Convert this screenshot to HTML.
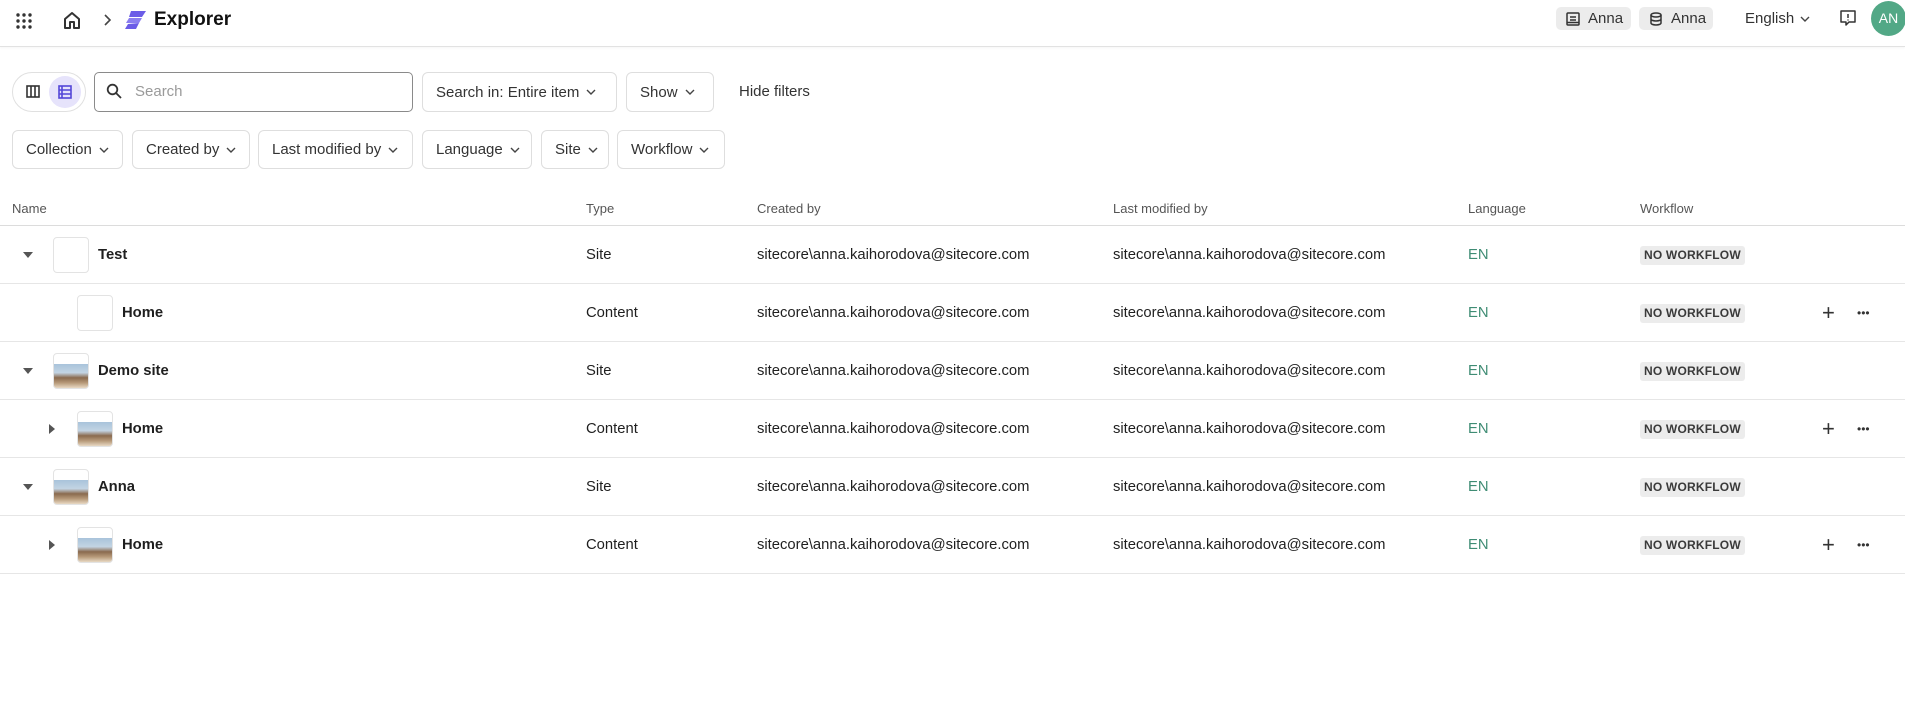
<!DOCTYPE html>
<html><head><meta charset="utf-8">
<style>
*{box-sizing:border-box;margin:0;padding:0}
body{width:1905px;height:724px;background:#fff;font-family:"Liberation Sans",Arial,sans-serif;color:#1a1a1a;position:relative;overflow:hidden}
.a{position:absolute}
.top{position:absolute;left:0;top:0;width:1905px;height:47px;border-bottom:1px solid #e2e2e2;box-shadow:0 1px 2px rgba(0,0,0,.04)}
.btn{position:absolute;border:1px solid #dedede;border-radius:6px;font-size:15px;color:#333;display:flex;align-items:center;padding-left:13px;height:39px}
.btn svg{margin-left:7px}
.hd{position:absolute;top:201px;font-size:13px;color:#555}
.row{position:absolute;left:0;width:1905px;height:58px;border-bottom:1px solid #e6e6e6}
.cell{position:absolute;top:0;line-height:58px;font-size:14.8px;color:#1f1f1f}
.nm{font-weight:bold}
.en{color:#3f8c74}
.wf{position:absolute;top:20px;left:1640px;height:19px;line-height:19px;padding:0 4px;background:#ececec;border-radius:3px;font-size:12px;font-weight:bold;color:#3a3a3a;letter-spacing:.2px}
.thumb{position:absolute;top:11px;width:36px;height:36px;border:1px solid #e3e3e3;border-radius:4px;background:#fff;overflow:hidden}
.img{background:linear-gradient(180deg,#fff 0,#fff 30%,#a9c3db 30%,#c3d4e3 55%,#8a6a4e 70%,#b79a7a 85%,#e8d9c4 100%)}
.tri{position:absolute;top:25px}
.dots{font-size:12px !important;letter-spacing:0 !important}
</style></head><body>
<div class="top">
  <svg class="a" style="left:15px;top:12px" width="18" height="18" viewBox="0 0 18 18" fill="#333"><circle cx="3" cy="3" r="1.7"/><circle cx="9" cy="3" r="1.7"/><circle cx="15" cy="3" r="1.7"/><circle cx="3" cy="9" r="1.7"/><circle cx="9" cy="9" r="1.7"/><circle cx="15" cy="9" r="1.7"/><circle cx="3" cy="15" r="1.7"/><circle cx="9" cy="15" r="1.7"/><circle cx="15" cy="15" r="1.7"/></svg>
  <svg class="a" style="left:62px;top:10px" width="20" height="20" viewBox="0 0 20 20" fill="none" stroke="#333" stroke-width="2"><path d="M3 9 L10 3 L17 9 V18 H12 V12 H8 V18 H3 Z" stroke-linejoin="round"/></svg>
  <svg class="a" style="left:102px;top:13px" width="10" height="14" viewBox="0 0 10 14" fill="none" stroke="#444" stroke-width="1.6"><path d="M3 2 L8 7 L3 12"/></svg>
  <svg class="a" style="left:125px;top:10px" width="22" height="20" viewBox="0 0 22 20"><path d="M6 1 H21 L17 7 H4 Z" fill="#6b5ce7"/><path d="M4 8 H17 L14 13 H1 Z" fill="#8b7ef0"/><path d="M14 13 L11 19 H0 L3 14 Z" fill="#6b5ce7"/></svg>
  <div class="a" style="left:154px;top:9px;font-size:19px;font-weight:bold;color:#111">Explorer</div>
  <div class="a" style="left:1556px;top:7px;width:75px;height:23px;background:#ececec;border-radius:5px;font-size:15px;color:#333;line-height:23px;padding-left:32px">Anna</div>
  <svg class="a" style="left:1566px;top:12px" width="14" height="14" viewBox="0 0 14 14" fill="none" stroke="#333" stroke-width="1.5"><rect x="1" y="1" width="12" height="12" rx="1"/><path d="M4 5H10M4 8H10M1 10.5H13"/></svg>
  <div class="a" style="left:1639px;top:7px;width:74px;height:23px;background:#ececec;border-radius:5px;font-size:15px;color:#333;line-height:23px;padding-left:32px">Anna</div>
  <svg class="a" style="left:1649px;top:12px" width="14" height="14" viewBox="0 0 14 14" fill="none" stroke="#333" stroke-width="1.5"><ellipse cx="7" cy="3" rx="5" ry="2"/><path d="M2 3V11C2 12 4 13 7 13S12 12 12 11V3M2 7C2 8 4 9 7 9S12 8 12 7"/></svg>
  <div class="a" style="left:1745px;top:10px;font-size:15px;color:#333">English</div>
  <svg class="a" style="left:1800px;top:15px" width="10" height="8" viewBox="0 0 10 8" fill="none" stroke="#444" stroke-width="1.4"><path d="M1 2L5 6L9 2"/></svg>
  <svg class="a" style="left:1839px;top:9px" width="18" height="18" viewBox="0 0 18 18" fill="none" stroke="#333" stroke-width="1.5"><path d="M2 2H16V13H10L7 16V13H2Z" stroke-linejoin="round"/><path d="M9 5V9M9 10.5V11.5"/></svg>
  <div class="a" style="left:1871px;top:1px;width:35px;height:35px;border-radius:50%;background:#52a886;color:#fff;font-size:14px;line-height:35px;text-align:center">AN</div>
</div>

<div class="a" style="left:12px;top:72px;width:74px;height:40px;border:1px solid #e0e0e0;border-radius:20px"></div>
<svg class="a" style="left:26px;top:85px" width="14" height="13" viewBox="0 0 14 13" fill="none" stroke="#333" stroke-width="1.6"><rect x="1" y="1" width="12" height="11"/><path d="M5 1V12M9 1V12"/></svg>
<div class="a" style="left:49px;top:76px;width:32px;height:32px;border-radius:50%;background:#e6e3fb"></div>
<svg class="a" style="left:58px;top:85px" width="14" height="14" viewBox="0 0 14 14" fill="none" stroke="#5447d8" stroke-width="1.6"><rect x="1" y="1" width="12" height="12"/><path d="M1 5H13M1 9H13M4 1V13"/></svg>
<div class="a" style="left:94px;top:72px;width:319px;height:40px;border:1px solid #8a8a8a;border-radius:5px"></div>
<svg class="a" style="left:106px;top:83px" width="16" height="16" viewBox="0 0 16 16" fill="none" stroke="#333" stroke-width="1.8"><circle cx="6.5" cy="6.5" r="4.8"/><path d="M10 10L15 15"/></svg>
<div class="a" style="left:135px;top:83px;font-size:15px;color:#9a9a9a">Search</div>
<div class="btn" style="left:422px;top:72px;width:195px;height:40px">Search in: Entire item<svg width="10" height="8" viewBox="0 0 10 8" fill="none" stroke="#444" stroke-width="1.4"><path d="M1 2L5 6L9 2"/></svg></div>
<div class="btn" style="left:626px;top:72px;width:88px;height:40px">Show<svg width="10" height="8" viewBox="0 0 10 8" fill="none" stroke="#444" stroke-width="1.4"><path d="M1 2L5 6L9 2"/></svg></div>
<div class="a" style="left:739px;top:83px;font-size:15px;color:#333">Hide filters</div>

<div class="btn" style="left:12px;top:130px;width:111px">Collection<svg width="10" height="8" viewBox="0 0 10 8" fill="none" stroke="#444" stroke-width="1.4"><path d="M1 2L5 6L9 2"/></svg></div>
<div class="btn" style="left:132px;top:130px;width:118px">Created by<svg width="10" height="8" viewBox="0 0 10 8" fill="none" stroke="#444" stroke-width="1.4"><path d="M1 2L5 6L9 2"/></svg></div>
<div class="btn" style="left:258px;top:130px;width:155px">Last modified by<svg width="10" height="8" viewBox="0 0 10 8" fill="none" stroke="#444" stroke-width="1.4"><path d="M1 2L5 6L9 2"/></svg></div>
<div class="btn" style="left:422px;top:130px;width:110px">Language<svg width="10" height="8" viewBox="0 0 10 8" fill="none" stroke="#444" stroke-width="1.4"><path d="M1 2L5 6L9 2"/></svg></div>
<div class="btn" style="left:541px;top:130px;width:68px">Site<svg width="10" height="8" viewBox="0 0 10 8" fill="none" stroke="#444" stroke-width="1.4"><path d="M1 2L5 6L9 2"/></svg></div>
<div class="btn" style="left:617px;top:130px;width:108px">Workflow<svg width="10" height="8" viewBox="0 0 10 8" fill="none" stroke="#444" stroke-width="1.4"><path d="M1 2L5 6L9 2"/></svg></div>

<div class="hd" style="left:12px">Name</div>
<div class="hd" style="left:586px">Type</div>
<div class="hd" style="left:757px">Created by</div>
<div class="hd" style="left:1113px">Last modified by</div>
<div class="hd" style="left:1468px">Language</div>
<div class="hd" style="left:1640px">Workflow</div>
<div class="a" style="left:0;top:225px;width:1905px;border-top:1px solid #dcdcdc"></div>

<div class="row" style="top:226px">
  <svg class="tri" style="left:23px;top:26px" width="10" height="6" viewBox="0 0 10 6"><path d="M0 0H10L5 6Z" fill="#555"/></svg>
  <div class="thumb" style="left:53px"></div>
  <div class="cell nm" style="left:98px">Test</div>
  <div class="cell" style="left:586px">Site</div>
  <div class="cell" style="left:757px">sitecore\anna.kaihorodova@sitecore.com</div>
  <div class="cell" style="left:1113px">sitecore\anna.kaihorodova@sitecore.com</div>
  <div class="cell en" style="left:1468px">EN</div>
  <div class="wf">NO WORKFLOW</div>
</div>
<div class="row" style="top:284px">
  <div class="thumb" style="left:77px"></div>
  <div class="cell nm" style="left:122px">Home</div>
  <div class="cell" style="left:586px">Content</div>
  <div class="cell" style="left:757px">sitecore\anna.kaihorodova@sitecore.com</div>
  <div class="cell" style="left:1113px">sitecore\anna.kaihorodova@sitecore.com</div>
  <div class="cell en" style="left:1468px">EN</div>
  <div class="wf">NO WORKFLOW</div>
  <div class="cell" style="left:1822px;font-size:22px;color:#333">+</div>
  <div class="cell dots" style="left:1857px;color:#333">•••</div>
</div>
<div class="row" style="top:342px">
  <svg class="tri" style="left:23px;top:26px" width="10" height="6" viewBox="0 0 10 6"><path d="M0 0H10L5 6Z" fill="#555"/></svg>
  <div class="thumb img" style="left:53px"></div>
  <div class="cell nm" style="left:98px">Demo site</div>
  <div class="cell" style="left:586px">Site</div>
  <div class="cell" style="left:757px">sitecore\anna.kaihorodova@sitecore.com</div>
  <div class="cell" style="left:1113px">sitecore\anna.kaihorodova@sitecore.com</div>
  <div class="cell en" style="left:1468px">EN</div>
  <div class="wf">NO WORKFLOW</div>
</div>
<div class="row" style="top:400px">
  <svg class="tri" style="left:49px;top:24px" width="6" height="10" viewBox="0 0 6 10"><path d="M0 0V10L6 5Z" fill="#555"/></svg>
  <div class="thumb img" style="left:77px"></div>
  <div class="cell nm" style="left:122px">Home</div>
  <div class="cell" style="left:586px">Content</div>
  <div class="cell" style="left:757px">sitecore\anna.kaihorodova@sitecore.com</div>
  <div class="cell" style="left:1113px">sitecore\anna.kaihorodova@sitecore.com</div>
  <div class="cell en" style="left:1468px">EN</div>
  <div class="wf">NO WORKFLOW</div>
  <div class="cell" style="left:1822px;font-size:22px;color:#333">+</div>
  <div class="cell dots" style="left:1857px;color:#333">•••</div>
</div>
<div class="row" style="top:458px">
  <svg class="tri" style="left:23px;top:26px" width="10" height="6" viewBox="0 0 10 6"><path d="M0 0H10L5 6Z" fill="#555"/></svg>
  <div class="thumb img" style="left:53px"></div>
  <div class="cell nm" style="left:98px">Anna</div>
  <div class="cell" style="left:586px">Site</div>
  <div class="cell" style="left:757px">sitecore\anna.kaihorodova@sitecore.com</div>
  <div class="cell" style="left:1113px">sitecore\anna.kaihorodova@sitecore.com</div>
  <div class="cell en" style="left:1468px">EN</div>
  <div class="wf">NO WORKFLOW</div>
</div>
<div class="row" style="top:516px">
  <svg class="tri" style="left:49px;top:24px" width="6" height="10" viewBox="0 0 6 10"><path d="M0 0V10L6 5Z" fill="#555"/></svg>
  <div class="thumb img" style="left:77px"></div>
  <div class="cell nm" style="left:122px">Home</div>
  <div class="cell" style="left:586px">Content</div>
  <div class="cell" style="left:757px">sitecore\anna.kaihorodova@sitecore.com</div>
  <div class="cell" style="left:1113px">sitecore\anna.kaihorodova@sitecore.com</div>
  <div class="cell en" style="left:1468px">EN</div>
  <div class="wf">NO WORKFLOW</div>
  <div class="cell" style="left:1822px;font-size:22px;color:#333">+</div>
  <div class="cell dots" style="left:1857px;color:#333">•••</div>
</div>
</body></html>
